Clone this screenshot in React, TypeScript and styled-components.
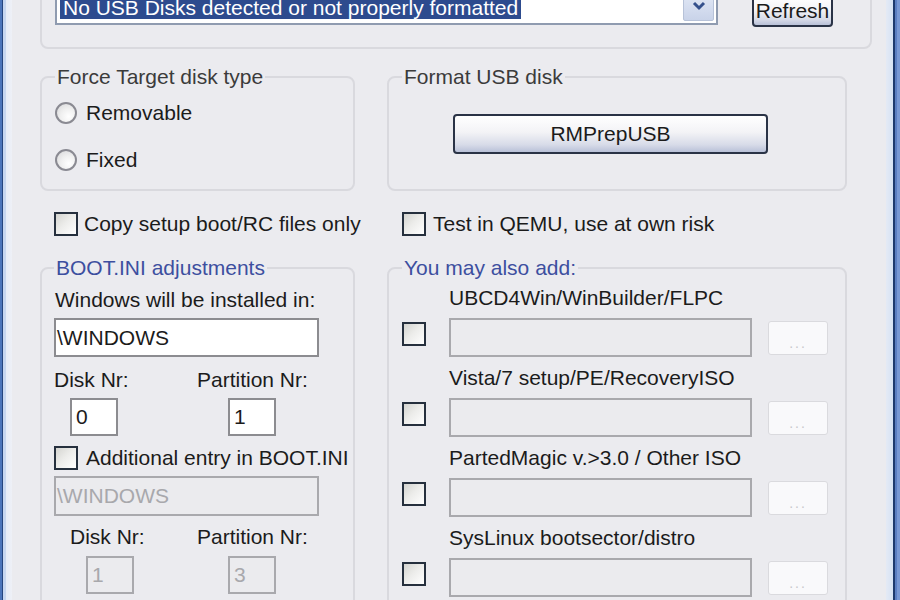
import { createGlobalStyle, styled } from 'styled-components';

const GlobalStyle = createGlobalStyle`
  html, body {
    margin: 0;
    padding: 0;
  }

  body {
    width: 900px;
    height: 600px;
    overflow: hidden;
    background: #ebebef;
    font-family: "Liberation Sans", Arial, sans-serif;
    font-size: 21px;
    color: #1b1b1b;
  }
`;

const Window = styled.div`
  display: flex;
  width: 900px;
  height: 600px;
  overflow: hidden;
  background: #ebebef;
`;

const FrameLeft = styled.div`
  flex: none;
  width: 12px;
  background: linear-gradient(to right,
    #4a74bb 0, #4a74bb 2px,
    #24457f 2px, #24457f 3px,
    #c6d6f0 3px, #c6d6f0 6px,
    #e6ecf8 6px, #eef0f6 12px);
`;

const FrameRight = styled.div`
  flex: none;
  width: 14px;
  background: linear-gradient(to right,
    #e4eaf5 0, #d6e2f4 7px,
    #1d3a6e 7px, #1d3a6e 9px,
    #5b7ec2 9px, #5b7ec2 11px,
    #7898d4 11px);
`;

const Client = styled.div`
  flex: 1;
  padding: 0 14px 0 28px;
  min-width: 0;
`;

const TopGroup = styled.div`
  display: flex;
  align-items: flex-end;
  box-sizing: border-box;
  height: 89px;
  margin-top: -40px;
  padding: 0 0 22px 13px;
  border: 2px solid #d9d9de;
  border-radius: 8px;
`;

const Combo = styled.div`
  display: flex;
  align-items: flex-start;
  box-sizing: border-box;
  width: 663px;
  height: 32px;
  padding: 2px 2px 0 3px;
  background: #ffffff;
  border: 2px solid #8f9bb0;
`;

const Selected = styled.span`
  padding: 0 3px;
  line-height: 22px;
  background: #2d4b8e;
  color: #ffffff;
  white-space: nowrap;
`;

const DropButton = styled.span`
  display: flex;
  align-items: flex-start;
  justify-content: center;
  box-sizing: border-box;
  width: 31px;
  height: 26px;
  margin-left: auto;
  margin-top: -2px;
  padding-top: 4px;
  background: linear-gradient(#dfe6f4, #c9d3e9);
  border: 1px solid #b7c2d8;
  border-radius: 2px;
`;

const Button = styled.button<{ $width: number; $height: number }>`
  box-sizing: border-box;
  width: ${p => p.$width}px;
  height: ${p => p.$height}px;
  padding: 0;
  font-family: inherit;
  font-size: 21px;
  color: #1b1b1b;
  background: linear-gradient(#ffffff 0%, #f3f3f6 45%, #d7dbe8 80%, #b9c1d8 100%);
  border: 2px solid #2a3346;
  border-radius: 4px;
`;

const RefreshButton = styled(Button)`
  margin-left: 34px;
  margin-bottom: -2px;
`;

const GroupRow = styled.div<{ $top: number }>`
  display: grid;
  grid-template-columns: 315px 460px;
  column-gap: 32px;
  margin-top: ${p => p.$top}px;
`;

const Group = styled.fieldset<{ $pad: string }>`
  margin: 0;
  min-width: 0;
  padding: ${p => p.$pad};
  border: 2px solid #d9d9de;
  border-radius: 8px;
`;

const Legend = styled.legend<{ $blue?: boolean }>`
  padding: 0 2px;
  line-height: 24px;
  color: ${p => (p.$blue ? '#3d4f9f' : '#3b3b3b')};
`;

const RadioRow = styled.label`
  display: flex;
  align-items: center;
  gap: 9px;
  height: 36px;

  & + & {
    margin-top: 11px;
  }
`;

const Radio = styled.span`
  flex: none;
  box-sizing: border-box;
  width: 22px;
  height: 22px;
  border-radius: 50%;
  border: 2px solid #8a8a92;
  background: radial-gradient(circle at 65% 70%, #ffffff 0%, #f0f0f0 45%, #d6d6d8 100%);
`;

const PrepButton = styled(Button)`
  margin-left: 51px;
`;

const CheckItem = styled.label<{ $indent: number; $gap?: number }>`
  display: flex;
  align-items: center;
  gap: ${p => p.$gap ?? 6}px;
  height: 24px;
  padding-left: ${p => p.$indent}px;
  white-space: nowrap;
`;

const CheckBox = styled.span`
  flex: none;
  box-sizing: border-box;
  width: 24px;
  height: 24px;
  border: 2px solid #26303e;
  background: linear-gradient(135deg, #d4d4d0 0%, #ececea 45%, #ffffff 100%);
`;

const Text = styled.div<{ $top?: number; $indent?: number }>`
  margin-top: ${p => p.$top ?? 0}px;
  padding-left: ${p => p.$indent ?? 0}px;
  line-height: 24px;
  white-space: nowrap;
`;

const TextBox = styled.div<{ $width: number; $height: number; $top?: number; $indent?: number; $disabled?: boolean }>`
  display: flex;
  align-items: center;
  box-sizing: border-box;
  width: ${p => p.$width}px;
  height: ${p => p.$height}px;
  margin-top: ${p => p.$top ?? 0}px;
  margin-left: ${p => p.$indent ?? 0}px;
  padding: 0 4px;
  background: ${p => (p.$disabled ? '#ebebee' : '#ffffff')};
  border: 2px solid ${p => (p.$disabled ? '#a9a9ad' : '#8c8c90')};
  color: ${p => (p.$disabled ? '#a8a8ac' : '#1b1b1b')};
  white-space: nowrap;
`;

const PathBox = styled(TextBox)`
  padding-left: 1px;
`;

const PairRow = styled.div<{ $top: number }>`
  display: grid;
  grid-template-columns: 143px 1fr;
  margin-top: ${p => p.$top}px;
`;

const Field = styled.div<{ $gap: number }>`
  display: flex;
  flex-direction: column;
  gap: ${p => p.$gap}px;
`;

const AddRow = styled.div`
  display: grid;
  grid-template-columns: 31px 303px 60px;
  grid-template-rows: 24px 39px;
  column-gap: 16px;
  row-gap: 8px;

  & + & {
    margin-top: 9px;
  }
`;

const AddLabel = styled.div`
  grid-column: 2 / 4;
  grid-row: 1;
  line-height: 24px;
  white-space: nowrap;
`;

const AddCheck = styled(CheckBox)`
  grid-column: 1;
  grid-row: 2;
  margin-top: 4px;
`;

const AddPath = styled.div`
  grid-column: 2;
  grid-row: 2;
  background: #ebebee;
  border: 2px solid #a9a9ad;
`;

const BrowseButton = styled.span`
  grid-column: 3;
  grid-row: 2;
  display: flex;
  align-items: flex-end;
  justify-content: center;
  height: 34px;
  margin-top: 3px;
  box-sizing: border-box;
  padding-bottom: 3px;
  font-size: 14px;
  letter-spacing: 2px;
  color: #c8c8cc;
  background: #f9f9fb;
  border: 1px solid #dadade;
  border-radius: 3px;
`;

const extras = [
  'UBCD4Win/WinBuilder/FLPC',
  'Vista/7 setup/PE/RecoveryISO',
  'PartedMagic v.>3.0 / Other ISO',
  'SysLinux bootsector/distro',
];

const Chevron = () => (
  <svg width="16" height="12" viewBox="0 0 16 12">
    <path d="M3 3 L8 8 L13 3" fill="none" stroke="#34508c" strokeWidth="3" />
  </svg>
);

const App = () => {
  return (
    <Window>
      <GlobalStyle />
      <FrameLeft />
      <Client>
        <TopGroup>
          <Combo>
            <Selected>No USB Disks detected or not properly formatted</Selected>
            <DropButton><Chevron /></DropButton>
          </Combo>
          <RefreshButton $width={81} $height={32}>Refresh</RefreshButton>
        </TopGroup>

        <GroupRow $top={16}>
          <Group $pad="6px 13px 11px">
            <Legend>Force Target disk type</Legend>
            <RadioRow><Radio />Removable</RadioRow>
            <RadioRow><Radio />Fixed</RadioRow>
          </Group>
          <Group $pad="25px 13px 11px">
            <Legend>Format USB disk</Legend>
            <PrepButton $width={315} $height={40}>RMPrepUSB</PrepButton>
          </Group>
        </GroupRow>

        <GroupRow $top={21}>
          <CheckItem $indent={14}><CheckBox />Copy setup boot/RC files only</CheckItem>
          <CheckItem $indent={15} $gap={7}><CheckBox />Test in QEMU, use at own risk</CheckItem>
        </GroupRow>

        <GroupRow $top={20}>
          <Group $pad="0 12px 30px">
            <Legend $blue>BOOT.INI adjustments</Legend>
            <Text $top={8} $indent={1}>Windows will be installed in:</Text>
            <PathBox $width={265} $height={39} $top={6}>\WINDOWS</PathBox>
            <PairRow $top={11}>
              <Field $gap={6}>
                <Text>Disk Nr:</Text>
                <TextBox $width={48} $height={38} $indent={16}>0</TextBox>
              </Field>
              <Field $gap={6}>
                <Text>Partition Nr:</Text>
                <TextBox $width={48} $height={38} $indent={31}>1</TextBox>
              </Field>
            </PairRow>
            <CheckItem as="div" $indent={0} $gap={8} style={{ marginTop: 10 }}>
              <CheckBox />Additional entry in BOOT.INI
            </CheckItem>
            <PathBox $width={265} $height={40} $top={6} $disabled>\WINDOWS</PathBox>
            <PairRow $top={9}>
              <Field $gap={7}>
                <Text $indent={16}>Disk Nr:</Text>
                <TextBox $width={48} $height={38} $indent={32} $disabled>1</TextBox>
              </Field>
              <Field $gap={7}>
                <Text>Partition Nr:</Text>
                <TextBox $width={48} $height={38} $indent={31} $disabled>3</TextBox>
              </Field>
            </PairRow>
          </Group>

          <Group $pad="6px 0 30px 13px">
            <Legend $blue>You may also add:</Legend>
            {extras.map(name => (
              <AddRow key={name}>
                <AddLabel>{name}</AddLabel>
                <AddCheck />
                <AddPath />
                <BrowseButton>...</BrowseButton>
              </AddRow>
            ))}
          </Group>
        </GroupRow>
      </Client>
      <FrameRight />
    </Window>
  );
};

export default App;
